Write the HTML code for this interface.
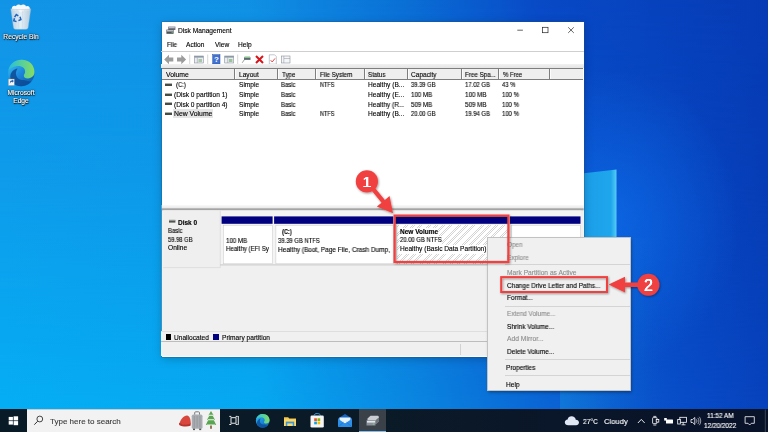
<!DOCTYPE html>
<html><head><meta charset="utf-8"><title>Disk Management</title>
<style>
html,body{margin:0;padding:0}
body{width:768px;height:432px;overflow:hidden;position:relative;font-family:"Liberation Sans",sans-serif;font-size:6.6px;color:#000;background:#0a5ac4}
.a{position:absolute}
.t{position:absolute;white-space:nowrap;line-height:10px;height:10px;transform-origin:0 50%;will-change:transform;-webkit-text-stroke:.12px currentColor}
#bg{left:0;top:0;width:768px;height:432px;background:linear-gradient(90deg,#04b0f6 0,#06aaf3 260px,#0a88e2 412px,#0a62d4 568px,#084bc8 700px,#0743bc 768px)}
#bg2{left:0;top:0;width:768px;height:432px;background:linear-gradient(90deg,#1294e6 0,#0f90e4 250px,#0a70d6 400px,#0849c6 540px,#063bb4 768px);-webkit-mask-image:linear-gradient(180deg,#000 0,rgba(0,0,0,.75) 40%,transparent 100%);mask-image:linear-gradient(180deg,#000 0,rgba(0,0,0,.75) 40%,transparent 100%)}
#bg3{left:480px;top:60px;width:288px;height:320px;background:radial-gradient(ellipse 130px 150px at 130px 160px,rgba(14,112,238,.68),rgba(14,108,238,0) 100%)}
#win{left:161.8px;top:21.6px;width:421.9px;height:335px;background:#fff;box-shadow:0 0 0 0.5px rgba(40,80,120,.6),0 2px 9px rgba(0,0,0,.22)}
.g{color:#8a8a8a}

.ms{left:504.8px;width:125px;height:.7px;background:#d4d4d4}
.d{width:20px;height:20px;line-height:20.6px;text-align:center;color:#fff;font-size:15.5px;text-shadow:.3px 0 0 #fff,-.3px 0 0 #fff}
</style></head><body>
<div id="bg" class="a"></div><div id="bg2" class="a"></div><div id="bg3" class="a"></div>
<svg class="a" style="left:0;top:0" width="768" height="432" viewBox="0 0 768 432">
 <defs>
  <linearGradient id="pane" x1="0" x2="1" y1="0" y2="0"><stop offset="0" stop-color="#1a98e6"/><stop offset="0.9" stop-color="#1ea6ec"/><stop offset="1" stop-color="#55ccf4"/></linearGradient>
  <linearGradient id="pane2" x1="0" x2="1" y1="0" y2="0"><stop offset="0" stop-color="#1488de"/><stop offset="1" stop-color="#0f6ed2" stop-opacity="0"/></linearGradient>
 </defs>
 <polygon points="560,176 616.5,169.5 616.5,238 560,238" fill="url(#pane)"/>
 <polygon points="560,238 660,238 660,432 560,432" fill="url(#pane2)" opacity=".55"/>
</svg>

<!-- desktop icons -->
<svg class="a" style="left:0;top:0" width="48" height="92" viewBox="0 0 48 92">
 <defs><linearGradient id="rb" x1="0" y1="0" x2="1" y2="0"><stop offset="0" stop-color="#c9d6e2"/><stop offset=".5" stop-color="#f3f7fa"/><stop offset="1" stop-color="#c2d0dd"/></linearGradient>
 <linearGradient id="de1" x1="0" y1="0" x2="1" y2="1"><stop offset="0" stop-color="#3ac7f2"/><stop offset=".5" stop-color="#1b86dc"/><stop offset="1" stop-color="#0b4f9c"/></linearGradient>
 <linearGradient id="de2" x1="0" y1="0" x2="1" y2="0"><stop offset="0" stop-color="#27bfd8"/><stop offset="1" stop-color="#86dd62"/></linearGradient></defs>
 <!-- recycle bin -->
 <g fill="#f6f8fa"><circle cx="14.500" cy="8.300" r="2.600"/><circle cx="18.700" cy="7.300" r="2.800"/><circle cx="23.200" cy="7.500" r="2.900"/><circle cx="27.300" cy="8.500" r="2.500"/><circle cx="21" cy="9.200" r="3"/></g>
 <path d="M10.800 8.800c3 1 17 1 20 0l-2.700 18.800c-.2 1.200-1 1.700-2 1.700h-10.600c-1 0-1.800-.5-2-1.700z" fill="url(#rb)" stroke="#a9bccb" stroke-width=".4" opacity=".93"/>
 <path d="M14.300 10.500l1.300 17.500M18.200 10.800l.5 17.800M22.600 10.800l-.3 17.800M26.800 10.500l-1.300 17.500" stroke="#cfdae4" stroke-width=".6" fill="none"/>
 <g fill="none" stroke="#1f63bb" stroke-width="1.500"><path d="M14.600 17.200l1.700-2.600l2 1.300"/><path d="M20 16.800l.9 2.700l-2.400 1.200"/><path d="M16.500 21.600l-2.700-.8l.7-2.500"/></g>
 <!-- edge -->
 <circle cx="21.300" cy="73" r="13.200" fill="url(#de1)"/>
 <path d="M8.400 70.500c1.500-7 7-10.700 13.200-10.700c7.700 0 12.900 5.300 12.900 12.300c0 3.800-3 6.300-6.500 6.300c-2.900 0-4.200-1.100-4.200-2.700c0-1.300 1.300-1.900 1.300-4.200c0-3-2.900-5.400-6.700-5.400c-4.600 0-8.400 2.300-10 4.400z" fill="url(#de2)"/>
 <path d="M22.800 80.100c-3.800 0-6.900-3-6.900-6.900c0-1.900.8-3.600 1.900-4.800c-4.400.6-7.500 4-7.500 8.400c0 5.200 4.400 9.400 10.900 9.400c4.200 0 8-1.900 10.500-5.200c-2.500 1.500-5.100-.9-8.900-.9z" fill="#0c4a94" opacity=".85"/>
 <rect x="8.300" y="79" width="6" height="6.500" fill="#f4f4f4" stroke="#8a8a8a" stroke-width=".4"/><path d="M9.800 84l.2-2.200c.3-.9 1.200-1.400 2.200-1.300v-1l1.700 1.600l-1.700 1.600v-1c-1.100-.1-1.900.6-2.400 2.300z" fill="#1c5fb8"/>
</svg>

<div id="desk" class="a" style="left:0;top:0;color:#fff;text-shadow:0 0 1.2px #000,.4px .7px 1.2px #000,0 0 2.200px rgba(0,0,0,.7);font-size:6.7px">
 <div class="t" style="left:0;width:42px;text-align:center;top:31.7px">Recycle Bin</div>
 <div class="t" style="left:0;width:42px;text-align:center;top:87.5px">Microsoft</div>
 <div class="t" style="left:0;width:42px;text-align:center;top:96.4px">Edge</div>
</div>

<!-- window -->
<div id="win" class="a"></div>


<!-- title bar -->
<svg class="a" style="left:165.5px;top:25.5px" width="10" height="9" viewBox="0 0 10 9">
 <rect x="2.2" y="0.6" width="7.2" height="3.4" fill="#6b7078"/><rect x="2.8" y="1" width="6" height="1.2" fill="#b9bec6"/>
 <rect x="0.4" y="3.6" width="7.2" height="4.2" fill="#4d5259"/><rect x="0.9" y="4.1" width="6.2" height="1.4" fill="#c5c9cf"/><rect x="5.6" y="6.2" width="1.2" height="0.8" fill="#5fd35f"/>
</svg>
<svg class="a" style="left:510px;top:22px" width="72" height="16" viewBox="0 0 72 16">
 <path d="M7.3 8.2h5.6" stroke="#222" stroke-width=".7" fill="none"/>
 <rect x="32.6" y="5.3" width="5.4" height="5.4" stroke="#222" stroke-width=".7" fill="none"/>
 <path d="M58.2 5.3l5.6 5.6M63.8 5.3l-5.6 5.6" stroke="#222" stroke-width=".7" fill="none"/>
</svg>
<!-- menu -->
<div class="a" style="left:161px;top:51px;width:422.5px;height:.7px;background:#cfcfcf"></div>
<!-- toolbar -->
<svg class="a" style="left:161px;top:52.5px" width="140" height="13" viewBox="0 0 140 13">
 <g fill="#9c9c9c"><path d="M3.200 6.500l4.800-4.700v2.600h4.300v4.200H8v2.600z"/><path d="M25.100 6.500l-4.800-4.700v2.600h-4.300v4.200h4.300v2.600z"/></g>
 <path d="M28.700 1.500v10M46.700 1.500v10M76.700 1.500v10" stroke="#c4c4c4" stroke-width=".7"/>
 <g><rect x="33.300" y="3" width="9" height="7" fill="#e9edf1" stroke="#8a929b" stroke-width=".6"/><rect x="33.300" y="3" width="9" height="1.600" fill="#8d99a6"/><path d="M36.300 4.600v5.400" stroke="#8a929b" stroke-width=".5"/><rect x="37.500" y="6" width="3.500" height="3" fill="#a8c8a8"/></g>
 <g><rect x="51.700" y="1.700" width="7.300" height="9.300" fill="#4272d2" stroke="#2a50a8" stroke-width=".5"/><text x="55.350" y="9.300" font-size="8" font-weight="bold" fill="#fff" text-anchor="middle" font-family="Liberation Sans, sans-serif">?</text></g>
 <g><rect x="63.700" y="3" width="9" height="7" fill="#e9edf1" stroke="#8a929b" stroke-width=".6"/><rect x="63.700" y="3" width="9" height="1.600" fill="#8d99a6"/><path d="M66.700 4.600v5.400" stroke="#8a929b" stroke-width=".5"/><rect x="67.900" y="6" width="3.500" height="3" fill="#9bc49b"/></g>
 <g><path d="M81.200 9.800l2.300-3.300" stroke="#7a8a7a" stroke-width=".8"/><rect x="83" y="4.300" width="6.500" height="2.600" fill="#5f6b73"/><rect x="83.500" y="3.400" width="5.500" height="1.300" fill="#8fd08f"/></g>
 <path d="M95 3l7 7M102 3l-7 7" stroke="#d9151b" stroke-width="2"/>
 <g><path d="M108.300 1.800h5.300l1.700 1.700v7.700h-7z" fill="#fff" stroke="#9aa0a8" stroke-width=".6"/><path d="M109.700 7.200l1.500 1.800l2.800-3.600" stroke="#e03a3a" stroke-width=".9" fill="none"/></g>
 <g><rect x="120.300" y="3" width="8.700" height="7" fill="#f4f6f8" stroke="#8a929b" stroke-width=".6"/><path d="M122.800 3v7M123 5.500h6" stroke="#8a929b" stroke-width=".5"/></g>
</svg>
<div class="a" style="left:161px;top:63.800px;width:422.500px;height:4.500px;background:linear-gradient(#f1f1f1,#e4e4e4)"></div>
<!-- list header -->
<div class="a" style="left:161.500px;top:68.200px;width:421.500px;height:11.400px;background:#efefef;border-top:.8px solid #7e7e7e;border-bottom:.8px solid #7e7e7e;box-sizing:border-box"></div>
<div class="a" style="left:234.3px;top:69.2px;width:.8px;height:9.6px;background:#7e7e7e;box-shadow:.8px 0 0 #fff"></div>
<div class="a" style="left:277.1px;top:69.2px;width:.8px;height:9.6px;background:#7e7e7e;box-shadow:.8px 0 0 #fff"></div>
<div class="a" style="left:315.1px;top:69.2px;width:.8px;height:9.6px;background:#7e7e7e;box-shadow:.8px 0 0 #fff"></div>
<div class="a" style="left:363.6px;top:69.2px;width:.8px;height:9.6px;background:#7e7e7e;box-shadow:.8px 0 0 #fff"></div>
<div class="a" style="left:407.1px;top:69.2px;width:.8px;height:9.6px;background:#7e7e7e;box-shadow:.8px 0 0 #fff"></div>
<div class="a" style="left:461.1px;top:69.2px;width:.8px;height:9.6px;background:#7e7e7e;box-shadow:.8px 0 0 #fff"></div>
<div class="a" style="left:498.1px;top:69.2px;width:.8px;height:9.6px;background:#7e7e7e;box-shadow:.8px 0 0 #fff"></div>
<div class="a" style="left:549.0px;top:69.2px;width:.8px;height:9.6px;background:#7e7e7e;box-shadow:.8px 0 0 #fff"></div>

<!-- list rows -->
<div class="a" style="left:164.7px;top:83.1px;width:7px;height:3px;background:linear-gradient(#c3c9c3 0,#9aa39a 30%,#474c47 45%,#474c47 100%)"></div>
<div class="a" style="left:164.7px;top:92.7px;width:7px;height:3px;background:linear-gradient(#c3c9c3 0,#9aa39a 30%,#474c47 45%,#474c47 100%)"></div>
<div class="a" style="left:164.7px;top:102.3px;width:7px;height:3px;background:linear-gradient(#c3c9c3 0,#9aa39a 30%,#474c47 45%,#474c47 100%)"></div>
<div class="a" style="left:164.7px;top:111.9px;width:7px;height:3px;background:linear-gradient(#c3c9c3 0,#9aa39a 30%,#474c47 45%,#474c47 100%)"></div>



<!-- lower pane -->
<svg class="a" style="left:0;top:200px" width="768" height="140" viewBox="0 200 768 140">
 <defs>
  <linearGradient id="spl" x1="0" y1="0" x2="0" y2="1"><stop offset="0" stop-color="#fafafa"/><stop offset="1" stop-color="#e6e6e6"/></linearGradient>
  <pattern id="hat" width="2.3" height="2.3" patternUnits="userSpaceOnUse"><rect width="2.3" height="2.3" fill="#fff"/><path d="M-0.5 0.5L0.5 -0.5M0 2.3L2.3 0M1.8 2.8L2.8 1.8" stroke="#c4c4c4" stroke-width=".42"/></pattern>
 </defs>
 <rect x="161.8" y="205" width="421.9" height="126.500" fill="#f0f0f0"/>
 <rect x="161.8" y="205" width="421.9" height="3.400" fill="url(#spl)"/>
 <rect x="161.8" y="208.300" width="421.900" height="2" fill="#a4a4a4"/>
 <rect x="163.300" y="210.600" width="418" height="54.600" fill="#f4f4f4"/>
 <rect x="163.300" y="210.600" width="56.900" height="57.200" fill="#efefef"/>
 <path d="M220.300 210.600V267.600M163.300 267.600H220.300" stroke="#d9d9d9" stroke-width=".8" fill="none"/>
 <path d="M220.300 264.900H581.300" stroke="#bdbdbd" stroke-width=".8"/>
 <rect x="221.6" y="216.4" width="51.0" height="7.4" fill="#000080"/>
 <rect x="223.4" y="225.2" width="49.2" height="38.6" fill="#fff" stroke="#c6c6c6" stroke-width=".5"/>
 <rect x="274.1" y="216.4" width="119.2" height="7.4" fill="#000080"/>
 <rect x="275.9" y="225.2" width="117.4" height="38.6" fill="#fff" stroke="#c6c6c6" stroke-width=".5"/>
 <rect x="395.2" y="216.4" width="113.0" height="7.4" fill="#000080"/>
 <rect x="397.0" y="225.2" width="111.2" height="38.6" fill="url(#hat)" stroke="#c6c6c6" stroke-width=".5"/>
 <rect x="509.8" y="216.4" width="70.7" height="7.4" fill="#000080"/>
 <rect x="511.6" y="225.2" width="68.9" height="38.6" fill="#fff" stroke="#c6c6c6" stroke-width=".5"/>
 <rect x="169" y="220.200" width="6.400" height="2.400" fill="#50554f"/><rect x="169" y="219.600" width="6.400" height=".9" fill="#b4bab4"/>
</svg>
<div class="a" style="left:397.2px;top:225.4px;width:110.8px;height:38.2px;background:repeating-linear-gradient(135deg,#fff 0,#fff 1.2px,#d4d4d4 1.2px,#d4d4d4 1.63px)"></div>
<!-- legend + status -->
<div class="a" style="left:161px;top:330.8px;width:422.5px;height:11.4px;background:#f0f0f0;border-top:.7px solid #dedede;border-bottom:.7px solid #bdbdbd;box-sizing:border-box"></div>
<div class="a" style="left:166px;top:333.8px;width:5.4px;height:6px;background:#000"></div>
<div class="a" style="left:213px;top:333.8px;width:5.6px;height:6px;background:#000080"></div>
<div class="a" style="left:161px;top:342.2px;width:422.5px;height:13.8px;background:#f0f0f0"></div>
<div class="a" style="left:460px;top:343.5px;width:.7px;height:11.5px;background:#d2d2d2"></div>
<div class="a" style="left:520px;top:343.5px;width:.7px;height:11.5px;background:#d2d2d2"></div>

<div class="a" style="left:173.2px;top:109.4px;width:40px;height:8.6px;background:#e6e6e6"></div>
<div class="t" style="left:177.50px;top:25.80px;font-size:6.60px;transform:scaleX(1.007);">Disk Management</div>
<div class="t" style="left:167.00px;top:40.10px;font-size:6.60px;transform:scaleX(0.941);">File</div>
<div class="t" style="left:186.00px;top:40.10px;font-size:6.60px;">Action</div>
<div class="t" style="left:215.00px;top:40.10px;font-size:6.60px;">View</div>
<div class="t" style="left:238.00px;top:40.10px;font-size:6.60px;">Help</div>
<div class="t" style="left:166.00px;top:70.20px;font-size:6.60px;transform:scaleX(1.036);">Volume</div>
<div class="t" style="left:238.80px;top:70.20px;font-size:6.60px;transform:scaleX(0.994);">Layout</div>
<div class="t" style="left:281.70px;top:70.20px;font-size:6.60px;transform:scaleX(0.930);">Type</div>
<div class="t" style="left:319.70px;top:70.20px;font-size:6.60px;transform:scaleX(0.938);">File System</div>
<div class="t" style="left:368.00px;top:70.20px;font-size:6.60px;transform:scaleX(0.925);">Status</div>
<div class="t" style="left:411.30px;top:70.20px;font-size:6.60px;transform:scaleX(0.990);">Capacity</div>
<div class="t" style="left:465.20px;top:70.20px;font-size:6.60px;transform:scaleX(0.944);">Free Spa...</div>
<div class="t" style="left:502.70px;top:70.20px;font-size:6.60px;transform:scaleX(0.903);">% Free</div>
<div class="t" style="left:176.00px;top:80.10px;font-size:6.60px;transform:scaleX(0.909);">(C:)</div>
<div class="t" style="left:238.80px;top:80.10px;font-size:6.60px;transform:scaleX(0.992);">Simple</div>
<div class="t" style="left:281.30px;top:80.10px;font-size:6.60px;transform:scaleX(0.899);">Basic</div>
<div class="t" style="left:319.70px;top:80.10px;font-size:6.60px;transform:scaleX(0.842);">NTFS</div>
<div class="t" style="left:368.00px;top:80.10px;font-size:6.60px;">Healthy (B...</div>
<div class="t" style="left:411.30px;top:80.10px;font-size:6.60px;transform:scaleX(0.879);">39.39 GB</div>
<div class="t" style="left:465.20px;top:80.10px;font-size:6.60px;transform:scaleX(0.897);">17.02 GB</div>
<div class="t" style="left:502.30px;top:80.10px;font-size:6.60px;transform:scaleX(0.885);">43 %</div>
<div class="t" style="left:173.80px;top:90.10px;font-size:6.60px;">(Disk 0 partition 1)</div>
<div class="t" style="left:238.80px;top:90.10px;font-size:6.60px;transform:scaleX(0.992);">Simple</div>
<div class="t" style="left:281.30px;top:90.10px;font-size:6.60px;transform:scaleX(0.899);">Basic</div>
<div class="t" style="left:368.00px;top:90.10px;font-size:6.60px;">Healthy (E...</div>
<div class="t" style="left:411.30px;top:90.10px;font-size:6.60px;transform:scaleX(0.933);">100 MB</div>
<div class="t" style="left:465.20px;top:90.10px;font-size:6.60px;transform:scaleX(0.950);">100 MB</div>
<div class="t" style="left:502.30px;top:90.10px;font-size:6.60px;transform:scaleX(0.909);">100 %</div>
<div class="t" style="left:173.80px;top:99.70px;font-size:6.60px;">(Disk 0 partition 4)</div>
<div class="t" style="left:238.80px;top:99.70px;font-size:6.60px;transform:scaleX(0.992);">Simple</div>
<div class="t" style="left:281.30px;top:99.70px;font-size:6.60px;transform:scaleX(0.899);">Basic</div>
<div class="t" style="left:368.00px;top:99.70px;font-size:6.60px;transform:scaleX(0.988);">Healthy (R...</div>
<div class="t" style="left:411.30px;top:99.70px;font-size:6.60px;transform:scaleX(0.933);">509 MB</div>
<div class="t" style="left:465.20px;top:99.70px;font-size:6.60px;transform:scaleX(0.950);">509 MB</div>
<div class="t" style="left:502.30px;top:99.70px;font-size:6.60px;transform:scaleX(0.909);">100 %</div>
<div class="t" style="left:173.80px;top:109.40px;font-size:6.60px;transform:scaleX(1.037);">New Volume</div>
<div class="t" style="left:238.80px;top:109.40px;font-size:6.60px;transform:scaleX(0.992);">Simple</div>
<div class="t" style="left:281.30px;top:109.40px;font-size:6.60px;transform:scaleX(0.899);">Basic</div>
<div class="t" style="left:319.70px;top:109.40px;font-size:6.60px;transform:scaleX(0.842);">NTFS</div>
<div class="t" style="left:368.00px;top:109.40px;font-size:6.60px;">Healthy (B...</div>
<div class="t" style="left:411.30px;top:109.40px;font-size:6.60px;transform:scaleX(0.879);">20.00 GB</div>
<div class="t" style="left:465.20px;top:109.40px;font-size:6.60px;transform:scaleX(0.897);">19.94 GB</div>
<div class="t" style="left:502.30px;top:109.40px;font-size:6.60px;transform:scaleX(0.909);">100 %</div>
<div class="t" style="left:177.90px;top:217.70px;font-size:6.50px;font-weight:bold;">Disk 0</div>
<div class="t" style="left:167.50px;top:226.40px;font-size:6.60px;transform:scaleX(0.899);">Basic</div>
<div class="t" style="left:167.50px;top:234.80px;font-size:6.60px;transform:scaleX(0.879);">59.98 GB</div>
<div class="t" style="left:167.50px;top:243.00px;font-size:6.60px;">Online</div>
<div class="t" style="left:226.00px;top:235.70px;font-size:6.60px;transform:scaleX(0.933);">100 MB</div>
<div class="t" style="left:226.00px;top:244.20px;font-size:6.60px;transform:scaleX(0.931);">Healthy (EFI Sy</div>
<div class="t" style="left:282.00px;top:227.10px;font-size:6.50px;font-weight:bold;transform:scaleX(0.866);">(C:)</div>
<div class="t" style="left:278.30px;top:235.80px;font-size:6.60px;transform:scaleX(0.889);">39.39 GB NTFS</div>
<div class="t" style="left:278.30px;top:244.50px;font-size:6.60px;transform:scaleX(0.983);">Healthy (Boot, Page File, Crash Dump,</div>
<div class="t" style="left:399.80px;top:227.20px;font-size:6.50px;font-weight:bold;background:#fff;line-height:8.6px;height:8.6px;margin-top:.7px;">New Volume</div>
<div class="t" style="left:399.80px;top:235.60px;font-size:6.60px;transform:scaleX(0.889);background:#fff;line-height:8.6px;height:8.6px;margin-top:.7px;">20.00 GB NTFS</div>
<div class="t" style="left:399.80px;top:244.20px;font-size:6.60px;background:#fff;line-height:8.6px;height:8.6px;margin-top:.7px;">Healthy (Basic Data Partition)</div>
<div class="t" style="left:174.00px;top:332.60px;font-size:6.60px;">Unallocated</div>
<div class="t" style="left:221.75px;top:332.60px;font-size:6.60px;">Primary partition</div>

<!-- context menu -->
<div class="a" style="left:486.8px;top:236.7px;width:144.2px;height:154.3px;background:#f0f0f0;border:.6px solid #c2c2c2;box-sizing:border-box;box-shadow:1.2px 1.5px 3px rgba(0,0,0,.35)"></div>
<div class="a ms" style="top:264.4px"></div>
<div class="a ms" style="top:305.6px"></div>
<div class="a ms" style="top:359.1px"></div>
<div class="a ms" style="top:375.4px"></div>
<div class="t" style="left:506.50px;top:239.90px;font-size:6.60px;color:#8e8e8e;transform:scaleX(0.960);">Open</div>
<div class="t" style="left:506.50px;top:252.50px;font-size:6.60px;color:#8e8e8e;transform:scaleX(0.971);">Explore</div>
<div class="t" style="left:506.50px;top:268.40px;font-size:6.60px;color:#8e8e8e;transform:scaleX(1.009);">Mark Partition as Active</div>
<div class="t" style="left:506.50px;top:281.10px;font-size:6.60px;transform:scaleX(0.972);">Change Drive Letter and Paths...</div>
<div class="t" style="left:506.50px;top:292.80px;font-size:6.60px;transform:scaleX(0.978);">Format...</div>
<div class="t" style="left:506.50px;top:309.40px;font-size:6.60px;color:#8e8e8e;transform:scaleX(0.969);">Extend Volume...</div>
<div class="t" style="left:506.50px;top:321.80px;font-size:6.60px;transform:scaleX(0.983);">Shrink Volume...</div>
<div class="t" style="left:506.50px;top:334.30px;font-size:6.60px;color:#8e8e8e;transform:scaleX(1.022);">Add Mirror...</div>
<div class="t" style="left:506.50px;top:346.60px;font-size:6.60px;transform:scaleX(0.975);">Delete Volume...</div>
<div class="t" style="left:506.40px;top:362.80px;font-size:6.60px;transform:scaleX(0.978);">Properties</div>
<div class="t" style="left:506.40px;top:379.60px;font-size:6.60px;transform:scaleX(0.995);">Help</div>

<!-- annotations -->
<svg class="a" style="left:0;top:0" width="768" height="432" viewBox="0 0 768 432">
 <defs><filter id="sh" x="-20%" y="-20%" width="150%" height="150%"><feDropShadow dx="0.8" dy="1" stdDeviation="0.9" flood-color="#000" flood-opacity=".4"/></filter></defs>
 <g filter="url(#sh)" fill="#f04040" stroke="none">
  <rect x="394.6" y="215.6" width="113.8" height="46.4" fill="none" stroke="#f04040" stroke-width="2.2"/>
  <rect x="501.2" y="277.1" width="105.8" height="14.9" fill="none" stroke="#f04040" stroke-width="2"/>
  <path d="M370.97 189.73 L374.23 187.07 L384.83 199.97 L389.55 196.1 L393 213.3 L376.85 206.5 L381.57 202.63 Z"/>
  <circle cx="366.9" cy="181.4" r="11.1"/>
  <path d="M640 282.5 L625 282.5 L625 276.8 L608.6 284.6 L625 292.4 L625 286.9 L640 286.9 Z"/>
  <circle cx="648.4" cy="284.8" r="11"/>
 </g>
</svg>
<div class="a d" style="left:356.9px;top:171.9px">1</div>
<div class="a d" style="left:638.4px;top:275.6px;font-size:16px">2</div>

<!-- taskbar -->
<div id="tb" class="a" style="left:0;top:409.2px;width:768px;height:22.8px;background:linear-gradient(90deg,#081a25 0%,#0b1a27 50%,#0a1629 72%,#081229 100%)"></div>
<div class="a" style="left:27px;top:409.2px;width:193px;height:22.8px;background:#f2f2f2;border-top:.6px solid #c8ccd0;box-sizing:border-box"></div>
<div class="a" style="left:359.3px;top:409.2px;width:26.8px;height:22.8px;background:#3a4149"></div>
<div class="a" style="left:359.3px;top:430.7px;width:26.8px;height:1.3px;background:#7fbdf0"></div>
<svg class="a" style="left:0;top:409px" width="768" height="23" viewBox="0 409 768 23">
 <!-- start -->
 <g fill="#fff"><rect x="8.7" y="416.9" width="4.2" height="3.5"/><rect x="13.6" y="416.3" width="4.5" height="4.100"/><rect x="8.7" y="421.100" width="4.2" height="3.500"/><rect x="13.6" y="421.100" width="4.500" height="4.100"/></g>
 <!-- search icon -->
 <circle cx="39.800" cy="419" r="2.900" fill="none" stroke="#333" stroke-width=".9"/><path d="M37.700 421.200l-3.400 3.500" stroke="#333" stroke-width="1"/>
 <!-- hat -->
 <path d="M179.500 423.500c1-4 4-8 7.500-8c2.500 0 3.800 4 3.800 8.500c-3.500 1.800-8 1.500-11.300-.5z" fill="#d8463c"/><path d="M179 422.800c3.500 2.200 8 2.600 11.800.8l-.3 2.200c-3.600 1.300-8 1-11.300-.8z" fill="#b5332c"/>
 <!-- suitcase -->
 <rect x="194.700" y="411.800" width="4.800" height="4" rx="1" fill="none" stroke="#777c82" stroke-width="1"/><rect x="191.700" y="414.600" width="10.800" height="14.200" rx="1.600" fill="#a9adb2"/><path d="M194.300 416v11.500M197.100 416v11.500M199.900 416v11.500" stroke="#8b9096" stroke-width=".7"/><rect x="193" y="428.600" width="2" height="1.500" fill="#555"/><rect x="199.200" y="428.600" width="2" height="1.500" fill="#555"/>
 <!-- tree -->
 <path d="M211 411l2.600 4.300h-1.200l2.600 4.500h-1.300l2.500 5.200h-10.400l2.500-5.200h-1.300l2.600-4.500h-1.200z" fill="#5aa552"/><path d="M209 415.300h4M208 419.800h6M206.800 425h8.400" stroke="#eef6ec" stroke-width="1.100"/><rect x="210.100" y="425.500" width="1.800" height="3.300" fill="#8a6a46"/>
 <!-- task view -->
 <g fill="none" stroke="#fff" stroke-width=".9"><rect x="231" y="417.700" width="5" height="5.500"/><path d="M229.300 416.400h2M229.300 424.500h2M235.700 416.400h2M235.700 424.500h2"/><path d="M238.300 416v8.800"/></g>
 <!-- edge -->
 <defs><linearGradient id="eg" x1="0" y1="0" x2="1" y2="1"><stop offset="0" stop-color="#35c1f1"/><stop offset=".45" stop-color="#1d8fe0"/><stop offset="1" stop-color="#0c59a4"/></linearGradient><linearGradient id="eg2" x1="0" y1="0" x2="1" y2="0"><stop offset="0" stop-color="#2bc3d2"/><stop offset="1" stop-color="#7edb6a"/></linearGradient></defs>
 <circle cx="262.700" cy="420.800" r="6.900" fill="url(#eg)"/>
 <path d="M256 419.500c.8-3.600 3.600-5.600 6.900-5.600c4 0 6.700 2.800 6.700 6.400c0 2-1.600 3.300-3.400 3.300c-1.500 0-2.200-.6-2.200-1.400c0-.7.700-1 .7-2.200c0-1.600-1.500-2.800-3.500-2.800c-2.400 0-4.400 1.200-5.200 2.300z" fill="url(#eg2)"/>
 <path d="M263.500 424.500c-2 0-3.600-1.600-3.600-3.600c0-1 .4-1.900 1-2.500c-2.300.3-3.900 2.100-3.900 4.400c0 2.700 2.300 4.900 5.700 4.900c2.200 0 4.200-1 5.500-2.700c-1.300.8-2.700-.5-4.700-.5z" fill="#0c4f9a" opacity=".85"/>
 <!-- explorer -->
 <path d="M284 417.200h4.200l1 1.300h6.800v7.500h-12z" fill="#f6c64a"/><rect x="284" y="419.400" width="12" height="6.600" fill="#fbd86a"/><rect x="285.800" y="421.600" width="8.400" height="4.400" fill="#3a96dd"/><rect x="287.300" y="423.400" width="5.400" height="2.600" fill="#fbd86a"/>
 <!-- store -->
 <path d="M314 415.500c0-2.600 6.400-2.600 6.400 0" fill="none" stroke="#3aa0e8" stroke-width="1"/><rect x="310.500" y="415.600" width="13.300" height="12" rx="1.300" fill="#f4f4f4"/><rect x="314.200" y="418.300" width="2.700" height="2.700" fill="#f25022"/><rect x="317.500" y="418.300" width="2.700" height="2.700" fill="#7fba00"/><rect x="314.200" y="421.600" width="2.700" height="2.700" fill="#00a4ef"/><rect x="317.500" y="421.600" width="2.700" height="2.700" fill="#ffb900"/>
 <!-- mail -->
 <path d="M338 418.500l7-4.500l7 4.500v8.500h-14z" fill="#1565c0"/><path d="M339.500 417.500h11v6h-11z" fill="#e8f2fb"/><path d="M338 418.800l7 4.600l7-4.600v8.200h-14z" fill="#2b8ee8"/><path d="M338 427l5.500-4.800M352 427l-5.500-4.800" stroke="#1a6fcc" stroke-width=".6"/>
 <!-- disk mgmt -->
 <path d="M367.500 418.500l3-2.800h7.500l1 1v4.500l-3 2.500h-8.500z" fill="#c9cdd2"/><path d="M366.500 420.200h9v5.300h-9z" fill="#8a9098"/><path d="M367 421h8v1.600h-8z" fill="#e3e6ea"/><path d="M375.500 420.200l3.500-3v4.300l-3.500 3.200z" fill="#6d737b"/><rect x="372.800" y="423.600" width="1.500" height=".9" fill="#7be07b"/>
 <!-- weather -->
 <path d="M568.200 425.300c-2 0-3.400-1.300-3.400-3c0-1.600 1.200-2.800 2.800-2.900c.4-1.900 2-3.100 4-3.100c2.200 0 3.900 1.400 4.200 3.500c1.800 0 3.200 1.200 3.200 2.800c0 1.500-1.300 2.700-3 2.700z" fill="#dfe6f4"/>
 <!-- chevron -->
 <path d="M637.900 423l3.400-3.600l3.400 3.600" fill="none" stroke="#fff" stroke-width=".9"/>
 <!-- tray 1 -->
 <g fill="none" stroke="#fff" stroke-width=".8"><rect x="652.600" y="417.600" width="4.400" height="6" rx=".6"/><path d="M653.300 416.400h3M653.300 425h3"/><rect x="656.200" y="419.500" width="2.600" height="2.600" fill="#0c1729"/></g>
 <!-- tray 2 -->
 <g fill="#fff"><rect x="666" y="419.400" width="7" height="4" rx=".5"/><rect x="664.200" y="418" width="2.600" height="2.600"/></g>
 <!-- tray 3 network -->
 <g fill="none" stroke="#fff" stroke-width=".8"><rect x="679.800" y="417.300" width="6.800" height="5"/><path d="M681.500 424.800h4M683.200 422.300v2.500"/><rect x="677.700" y="419.500" width="2.600" height="4.500" fill="#0a1429"/></g>
 <!-- tray 4 volume -->
 <g fill="none" stroke="#fff" stroke-width=".8"><path d="M691 419.500h1.600l2.200-2v7l-2.200-2h-1.600z"/><path d="M696.300 419.300c.8.900.8 2.500 0 3.400M697.800 417.900c1.500 1.700 1.500 4.500 0 6.200M699.200 416.800c2 2.300 2 6.100 0 8.400" stroke-width=".6"/></g>
 <!-- notification -->
 <path d="M745.100 416.700h9.200v6.600h-3l-1.600 1.700l-1.600-1.700h-3z" fill="none" stroke="#fff" stroke-width=".8"/>
 <path d="M765.300 409.500v22.500" stroke="#5a6470" stroke-width=".6"/>
</svg>
<div class="t" style="left:50.00px;top:417.10px;font-size:8.00px;color:#3c3c3c;">Type here to search</div>
<div class="t" style="left:583.00px;top:417.10px;font-size:8.00px;color:#fff;transform:scaleX(0.839);">27°C</div>
<div class="t" style="left:604.30px;top:417.10px;font-size:8.00px;color:#fff;transform:scaleX(0.952);">Cloudy</div>
<div class="t" style="left:706.70px;top:410.70px;font-size:6.70px;color:#fff;transform:scaleX(0.958);">11:52 AM</div>
<div class="t" style="left:704.00px;top:420.90px;font-size:6.70px;color:#fff;transform:scaleX(0.965);">12/20/2022</div>
</body></html>
